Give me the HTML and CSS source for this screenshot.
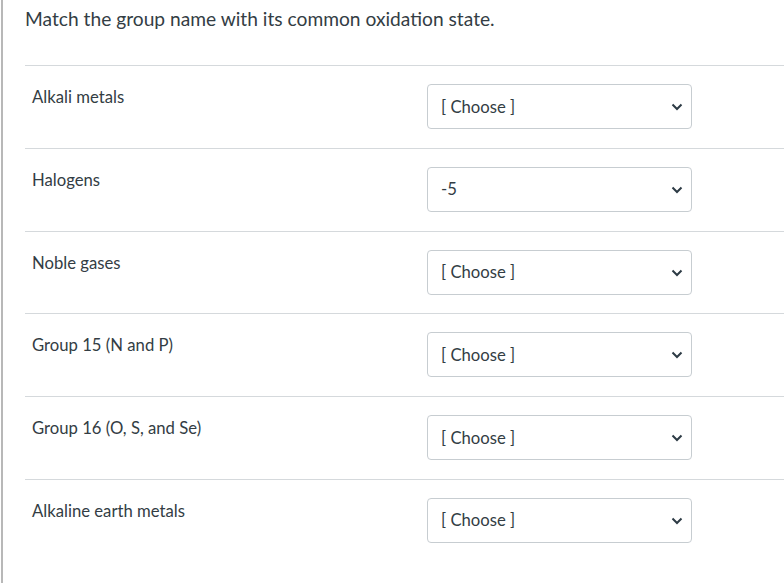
FILE: index.html
```html
<!DOCTYPE html>
<html lang="en">
<head>
    <meta charset="UTF-8">
    <meta name="viewport" content="width=device-width, initial-scale=1.0">
    <title>Matching Question</title>
    <link rel="stylesheet" href="styles.css">
</head>
<body>
    <div class="question">
        <p class="question-text">Match the group name with its common oxidation state.</p>
        <div class="answers">
            <div class="match-row">
                <div class="match-label">Alkali metals</div>
                <div class="select-wrap">
                    <select><option>[ Choose ]</option></select>
                    <svg class="chevron" viewBox="0 0 12 8"><path d="M1.5 1.5 L6 6 L10.5 1.5"/></svg>
                </div>
            </div>
            <div class="match-row">
                <div class="match-label">Halogens</div>
                <div class="select-wrap">
                    <select><option>-5</option></select>
                    <svg class="chevron" viewBox="0 0 12 8"><path d="M1.5 1.5 L6 6 L10.5 1.5"/></svg>
                </div>
            </div>
            <div class="match-row">
                <div class="match-label">Noble gases</div>
                <div class="select-wrap">
                    <select><option>[ Choose ]</option></select>
                    <svg class="chevron" viewBox="0 0 12 8"><path d="M1.5 1.5 L6 6 L10.5 1.5"/></svg>
                </div>
            </div>
            <div class="match-row">
                <div class="match-label">Group 15 (N and P)</div>
                <div class="select-wrap">
                    <select><option>[ Choose ]</option></select>
                    <svg class="chevron" viewBox="0 0 12 8"><path d="M1.5 1.5 L6 6 L10.5 1.5"/></svg>
                </div>
            </div>
            <div class="match-row">
                <div class="match-label">Group 16 (O, S, and Se)</div>
                <div class="select-wrap">
                    <select><option>[ Choose ]</option></select>
                    <svg class="chevron" viewBox="0 0 12 8"><path d="M1.5 1.5 L6 6 L10.5 1.5"/></svg>
                </div>
            </div>
            <div class="match-row">
                <div class="match-label">Alkaline earth metals</div>
                <div class="select-wrap">
                    <select><option>[ Choose ]</option></select>
                    <svg class="chevron" viewBox="0 0 12 8"><path d="M1.5 1.5 L6 6 L10.5 1.5"/></svg>
                </div>
            </div>
        </div>
    </div>
</body>
</html>
```

FILE: styles.css
```css
body {
    margin: 0;
    font-family: Lato, "Open Sans", sans-serif;
    color: #333d44;
    background-color: white;
}
.question {
    margin-left: 1px;
    border-left: 2px solid #b8b8b8;
    padding-left: 22px;
    min-height: 583px;
    box-sizing: border-box;
    overflow: hidden;
}
.question-text {
    margin: 0;
    padding-top: 5px;
    font-size: 19.2px;
    line-height: 28px;
    height: 60px;
}
.match-row {
    display: flex;
    align-items: flex-start;
    border-top: 1px solid #d5d9dc;
    padding: 18px 0 18.8px 7px;
}
.match-label {
    width: 395px;
    padding-top: 1px;
    font-size: 16.7px;
    line-height: 24px;
}
.select-wrap {
    position: relative;
    width: 265px;
    height: 45px;
}
.select-wrap select {
    -webkit-appearance: none;
    appearance: none;
    width: 100%;
    height: 100%;
    border: 1px solid #c7cdd1;
    border-radius: 4px;
    background-color: white;
    padding: 0 0 0 13px;
    font-family: Lato, "Open Sans", sans-serif;
    font-size: 16.7px;
    color: #333d44;
}
.chevron {
    position: absolute;
    right: 9px;
    top: 19px;
    width: 12px;
    height: 8px;
    fill: none;
    stroke: #2d3b45;
    stroke-width: 2;
    pointer-events: none;
}
```
